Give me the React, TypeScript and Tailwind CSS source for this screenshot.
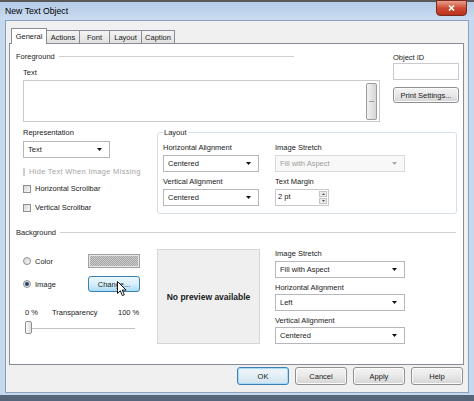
import type { ReactNode } from 'react';

const LABEL = "text-[7.5px] leading-[9px] text-[#1a1a1a] whitespace-nowrap";

function Caret({ dim }: { dim?: boolean }) {
  return (
    <svg width="5" height="3" viewBox="0 0 5 3" className="shrink-0">
      <path d="M0 0h5L2.5 3z" fill={dim ? '#a8a8a8' : '#111'} />
    </svg>
  );
}

function Select({ value, className, dim }: { value: string; className: string; dim?: boolean }) {
  return (
    <div
      className={`flex items-center h-[17px] border pl-[4px] pr-[7px] ${
        dim ? 'border-[#d9d9d9] bg-[#f8f8f8] text-[#9c9c9c]' : 'border-[#b5b7bd] bg-white text-[#1a1a1a]'
      } ${className}`}
    >
      <span className="flex-1 text-[7.5px] leading-[9px] whitespace-nowrap">{value}</span>
      <Caret dim={dim} />
    </div>
  );
}

function Heading({ title, className }: { title: string; className: string }) {
  return (
    <div className={`flex items-center gap-[4px] ${className}`}>
      <span className={LABEL}>{title}</span>
      <div className="flex-1 border-t border-[#d0d0d0]" />
    </div>
  );
}

function Check({ label, disabled }: { label: string; disabled?: boolean }) {
  return (
    <div className="flex items-center gap-[4px] h-[9px]">
      <div
        className={`w-[8px] h-[8px] border ${
          disabled
            ? 'border-[#cfcfcf] bg-[#f4f4f4]'
            : 'border-[#8e8f8f] bg-linear-to-br from-[#d8d8d8] to-[#f8f8f8]'
        }`}
      />
      <span className={`text-[7.5px] leading-[9px] whitespace-nowrap ${disabled ? 'text-[#a5a5a5] tracking-[0.3px]' : 'text-[#1a1a1a]'}`}>
        {label}
      </span>
    </div>
  );
}

function Radio({ label, checked }: { label: string; checked?: boolean }) {
  return (
    <div className="flex items-center gap-[4px]">
      <div className="w-[8px] h-[8px] rounded-full border border-[#8e8f8f] bg-linear-to-br from-[#d4d4d4] to-[#fafafa] flex items-center justify-center">
        {checked && <div className="w-[4px] h-[4px] rounded-full bg-[#24406b]" />}
      </div>
      <span className={LABEL}>{label}</span>
    </div>
  );
}

function Button({ children, className, variant }: { children: ReactNode; className: string; variant?: 'focus' | 'hover' }) {
  const look =
    variant === 'hover'
      ? 'border-[#3c7fb1] bg-linear-to-b from-[#eaf6fd] via-[#d9f0fc] to-[#a9dbf6]'
      : variant === 'focus'
        ? 'border-[#3c7fb1] bg-linear-to-b from-[#f0f6fa] via-[#e2eef5] to-[#cfe2ee] shadow-[inset_0_0_0_1px_#a8dcf8]'
        : 'border-[#8e8f8f] bg-linear-to-b from-[#f4f4f4] via-[#e8e8e8] to-[#d4d4d4] shadow-[inset_0_0_0_1px_#fbfbfb]';
  return (
    <div className={`relative flex items-center justify-center border rounded-[3px] ${look} ${className}`}>
      <span className={LABEL}>{children}</span>
    </div>
  );
}

function Label({ children, className = '' }: { children: ReactNode; className?: string }) {
  return <div className={`${LABEL} ${className}`}>{children}</div>;
}

const TABS = [
  { name: 'General', w: 'w-[36px]' },
  { name: 'Actions', w: 'w-[34px]' },
  { name: 'Font', w: 'w-[31px]' },
  { name: 'Layout', w: 'w-[33px]' },
  { name: 'Caption', w: 'w-[34px]' },
];

export default function App() {
  return (
    <div className="w-[474px] h-[401px] overflow-hidden bg-[#56657a] font-['Liberation_Sans',Arial,sans-serif]">
      <div className="h-[395px] flex flex-col bg-[#c4d8ee] border-t-2 border-[#5a5a5a]">
        {/* title bar */}
        <div className="h-[18px] flex items-start bg-linear-to-b from-[#b4cbe6] to-[#c9dbf0]">
          <span className="ml-[5px] mt-[4px] text-[8.7px] leading-[10px] text-black">New Text Object</span>
          <div className="ml-auto mr-[7px] -mt-[2px] w-[31px] h-[16px] rounded-b-[4px] border border-[#7a2a1e] bg-linear-to-b from-[#e7a08f] via-[#cf4a32] to-[#b8301c] flex items-center justify-center">
            <svg width="7" height="6" viewBox="0 0 7 6">
              <path d="M1 0.5L6 5.5M6 0.5L1 5.5" stroke="#fff" strokeWidth="1.6" />
            </svg>
          </div>
        </div>

        {/* client */}
        <div className="mx-[5px] flex-1 mb-[2px] border border-[#8aa0bc] bg-[#f0f0f0] flex flex-col">
          {/* tabs */}
          <div className="mt-[7px] ml-[5px] flex items-end h-[15px]">
            {TABS.map((t, i) =>
              i === 0 ? (
                <div
                  key={t.name}
                  className={`${t.w} h-[16px] -mb-px z-10 bg-white border border-b-0 border-[#898c95] flex items-center justify-center`}
                >
                  <span className={LABEL}>{t.name}</span>
                </div>
              ) : (
                <div
                  key={t.name}
                  className={`${t.w} h-[13px] -ml-px bg-linear-to-b from-[#f4f4f4] to-[#e1e1e1] border border-b-0 border-[#898c95] flex items-center justify-center`}
                >
                  <span className={LABEL}>{t.name}</span>
                </div>
              ),
            )}
          </div>

          {/* panel */}
          <div className="ml-[3px] w-[455px] h-[322px] bg-white border border-[#898c95] flex flex-col">
            {/* foreground */}
            <div className="mt-[8px] flex">
              <div className="w-[370px] flex flex-col">
                <Heading title="Foreground" className="ml-[6px] w-[278px]" />
                <Label className="ml-[13px] mt-[7px]">Text</Label>
                <div className="ml-[13px] mt-[3px] w-[357px] h-[42px] border border-[#c8cacf] bg-white flex justify-end items-center pr-[2px]">
                  <div className="w-[11px] h-[37px] border border-[#9c9c9c] rounded-[2px] bg-linear-to-r from-[#f2f2f2] to-[#d6d6d6] flex items-center justify-center">
                    <div className="w-[5px] border-t border-[#9a9a9a]" />
                  </div>
                </div>
              </div>
              <div className="ml-[13px] w-[66px] flex flex-col">
                <Label className="mt-[1px]">Object ID</Label>
                <div className="mt-[1px] h-[17px] border border-[#c8cacf] bg-white" />
                <Button className="mt-[7px] h-[16px]">Print Settings...</Button>
              </div>
            </div>

            {/* representation + layout */}
            <div className="mt-[6px] flex items-start">
              <div className="ml-[13px] w-[87px] flex flex-col">
                <Label>Representation</Label>
                <Select value="Text" className="mt-[4px] w-[87px]" />
                <div className="mt-[9px]">
                  <Check label="Hide Text When Image Missing" disabled />
                </div>
                <div className="mt-[8px]">
                  <Check label="Horizontal Scrollbar" />
                </div>
                <div className="mt-[10px]">
                  <Check label="Vertical Scrollbar" />
                </div>
              </div>
              <fieldset className="ml-[47px] w-[300px] border border-[#d5dfe5] rounded-[3px] pl-[5px] pb-[7px]">
                <legend className={`${LABEL} px-[1px]`}>Layout</legend>
                <div className="mt-[6px] flex gap-[16px]">
                  <div className="w-[96px] flex flex-col">
                    <Label>Horizontal Alignment</Label>
                    <Select value="Centered" className="mt-[3px]" />
                    <Label className="mt-[5px]">Vertical Alignment</Label>
                    <Select value="Centered" className="mt-[3px]" />
                  </div>
                  <div className="w-[130px] flex flex-col">
                    <Label>Image Stretch</Label>
                    <Select value="Fill with Aspect" className="mt-[3px]" dim />
                    <Label className="mt-[5px]">Text Margin</Label>
                    <div className="mt-[3px] w-[54px] h-[17px] border border-[#c8cacf] bg-white flex">
                      <span className="flex-1 pl-[2px] pt-[2px] text-[7.5px] leading-[9px] text-[#1a1a1a]">2 pt</span>
                      <div className="w-[10px] flex flex-col gap-px p-px">
                        <div className="flex-1 border border-[#c4c4c4] bg-[#ececec] flex items-center justify-center">
                          <svg width="3" height="2" viewBox="0 0 3 2"><path d="M0 2h3L1.5 0z" fill="#555" /></svg>
                        </div>
                        <div className="flex-1 border border-[#c4c4c4] bg-[#ececec] flex items-center justify-center">
                          <svg width="3" height="2" viewBox="0 0 3 2"><path d="M0 0h3L1.5 2z" fill="#555" /></svg>
                        </div>
                      </div>
                    </div>
                  </div>
                </div>
              </fieldset>
            </div>

            {/* background */}
            <Heading title="Background" className="mt-[14px] ml-[6px] w-[440px]" />
            <div className="mt-[12px] flex items-start">
              <div className="ml-[13px] w-[117px] flex flex-col">
                <div className="mt-[5px] h-[14px] flex items-center">
                  <Radio label="Color" />
                  <div className="ml-auto w-[52px] h-[14px] border border-[#a0a0a0] p-px bg-[#e8e8e8]">
                    <div className="w-full h-full bg-[#bdbdbd] bg-[repeating-conic-gradient(#a6a6a6_0_25%,#cacaca_0_50%)] bg-size-[2px_2px]" />
                  </div>
                </div>
                <div className="mt-[8px] h-[16px] flex items-center">
                  <Radio label="Image" checked />
                  <Button variant="hover" className="ml-auto w-[52px] h-[16px]">
                    Change...
                    <svg
                      width="10"
                      height="16"
                      viewBox="0 0 10 16"
                      className="absolute left-[28px] top-[4px]"
                    >
                      <path d="M0.5 0.5V12.5L3.3 9.8L5.4 14.6L7.3 13.8L5.3 9.1H9.1Z" fill="#fff" stroke="#000" strokeWidth="0.9" />
                    </svg>
                  </Button>
                </div>
                <div className="mt-[16px] flex">
                  <Label className="ml-[2px] w-[27px]">0 %</Label>
                  <Label className="w-[66px]">Transparency</Label>
                  <Label>100 %</Label>
                </div>
                <div className="mt-[4px] ml-[2px] w-[110px] h-[14px] relative flex items-center">
                  <div className="ml-[3px] flex-1 border-t border-[#c2c2c2]" />
                  <div className="absolute left-0 top-0 w-[7px] h-[13px] rounded-[2px] border border-[#8e8f8f] bg-linear-to-r from-[#fdfdfd] to-[#dedede]" />
                </div>
              </div>
              <div className="ml-[17px] w-[103px] h-[95px] border border-[#d6d6d6] bg-[#efefef] flex items-center justify-center">
                <span className="text-[8.5px] leading-[10px] font-bold text-[#202020] whitespace-nowrap">No preview available</span>
              </div>
              <div className="ml-[15px] w-[130px] flex flex-col">
                <Label>Image Stretch</Label>
                <Select value="Fill with Aspect" className="mt-[3px]" />
                <Label className="mt-[5px]">Horizontal Alignment</Label>
                <Select value="Left" className="mt-[2px]" />
                <Label className="mt-[5px]">Vertical Alignment</Label>
                <Select value="Centered" className="mt-[2px]" />
              </div>
            </div>
          </div>

          {/* dialog buttons */}
          <div className="mt-[2px] ml-[231px] flex gap-[6px]">
            <Button variant="focus" className="w-[52px] h-[18px]">OK</Button>
            <Button className="w-[52px] h-[18px]">Cancel</Button>
            <Button className="w-[52px] h-[18px]">Apply</Button>
            <Button className="w-[52px] h-[18px]">Help</Button>
          </div>
        </div>
      </div>
    </div>
  );
}
